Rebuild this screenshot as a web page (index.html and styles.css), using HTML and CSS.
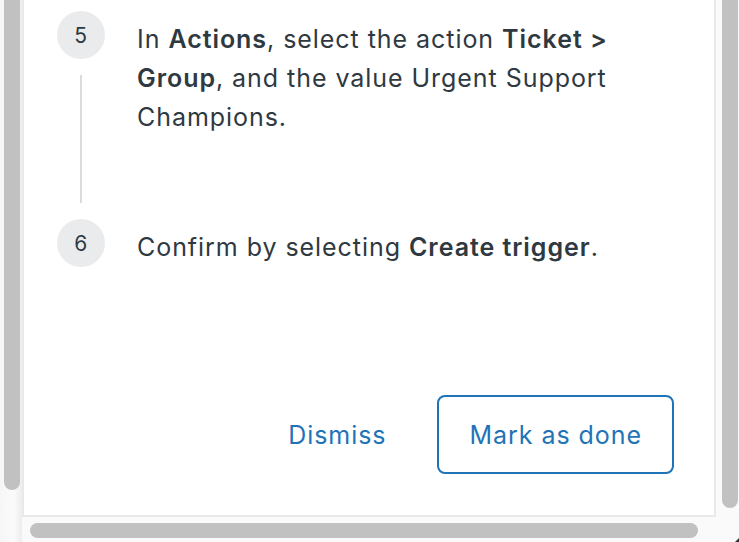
FILE: index.html
```html
<!DOCTYPE html>
<html lang="en">
<head>
    <meta charset="UTF-8">
    <meta name="viewport" content="width=device-width, initial-scale=1.0">
    <title>Trigger steps</title>
    <link rel="stylesheet" href="styles.css">
</head>
<body>
    <div id="frame">
        <div class="vtrack" id="lefttrack"><div class="vthumb" id="leftthumb"></div></div>
        <div id="panel">
            <div class="step">
                <div class="marker">
                    <div class="num">5</div>
                    <div class="rail"></div>
                </div>
                <div class="text long">In <b>Actions</b>, select the action <b>Ticket &gt; Group</b>, and the value Urgent Support Champions.</div>
            </div>
            <div class="step">
                <div class="marker">
                    <div class="num">6</div>
                </div>
                <div class="text">Confirm by selecting <b>Create trigger</b>.</div>
            </div>
            <div id="actions">
                <button class="bots" id="dismiss">Dismiss</button>
                <button class="bots" id="done">Mark as done</button>
            </div>
        </div>
        <div class="vtrack" id="righttrack"><div class="vthumb" id="rightthumb"></div></div>
        <div id="htrack"><div id="hthumb"></div></div>
        <div id="corner"></div>
    </div>
</body>
</html>
```

FILE: styles.css
```css
body{
    margin: 0;
    background-color: #fafafa;
    overflow: hidden;
    font-family: Inter, "Noto Sans", sans-serif;
    color: #2f3941;
}
#frame{
    display: grid;
    grid-template-columns: 22px 694px 23px;
    grid-template-rows: 517px 25px;
    width: 739px;
    height: 542px;
}
.vtrack{
    background-color: #f1f1f1;
    display: flex;
    flex-direction: column;
}
#lefttrack{
    grid-row: 1 / 3;
    padding-left: 4px;
    background: linear-gradient(to right, #f6f6f6, #fbfbfb 60%, #ededed);
}
#leftthumb{
    width: 16px;
    height: 490px;
    background-color: #c1c1c1;
    border-radius: 0 0 8px 8px;
}
#righttrack{
    padding-left: 6px;
    background-color: #fafafa;
}
#rightthumb{
    width: 16px;
    height: 508px;
    background-color: #c1c1c1;
    border-radius: 0 0 8px 8px;
}
#panel{
    background-color: #fff;
    border: 2px solid #e9e9e9;
    border-top: none;
    padding: 11px 0 0 33px;
    overflow: hidden;
}
#htrack{
    padding: 6px 0 0 8px;
    background-color: #fafafa;
}
#hthumb{
    width: 668px;
    height: 15px;
    background-color: #c1c1c1;
    border-radius: 8px;
}
#corner{
    position: relative;
    background-color: #fafafa;
}
#corner::after{
    content: "";
    position: absolute;
    right: 0;
    bottom: 0;
    border-left: 4px solid transparent;
    border-bottom: 4px solid #333;
}
.step{
    display: flex;
}
.marker{
    width: 48px;
    display: flex;
    flex-direction: column;
    align-items: center;
}
.num{
    width: 48px;
    height: 48px;
    border-radius: 50%;
    background-color: #e9ebed;
    display: flex;
    align-items: center;
    justify-content: center;
    font-size: 21px;
    letter-spacing: 0.5px;
}
.rail{
    flex: 1;
    width: 2px;
    margin: 16px 0;
    background-color: #d8dcde;
}
.text{
    margin-left: 32px;
    padding-top: 9px;
    font-size: 25px;
    line-height: 39px;
    letter-spacing: 0.95px;
    width: 505px;
}
.text.long{
    padding-bottom: 82px;
}
.text b{
    font-weight: 600;
}
#actions{
    display: flex;
    justify-content: flex-end;
    align-items: center;
    margin-top: 128px;
    padding-right: 40px;
    gap: 18px;
}
.bots{
    font-family: inherit;
    font-size: 25px;
    letter-spacing: 0.95px;
    color: #1f73b7;
    background-color: transparent;
    border: 2px solid transparent;
    border-radius: 8px;
    height: 79px;
    padding: 0 30px 0 31px;
}
#done{
    border-color: #1f73b7;
}
```
